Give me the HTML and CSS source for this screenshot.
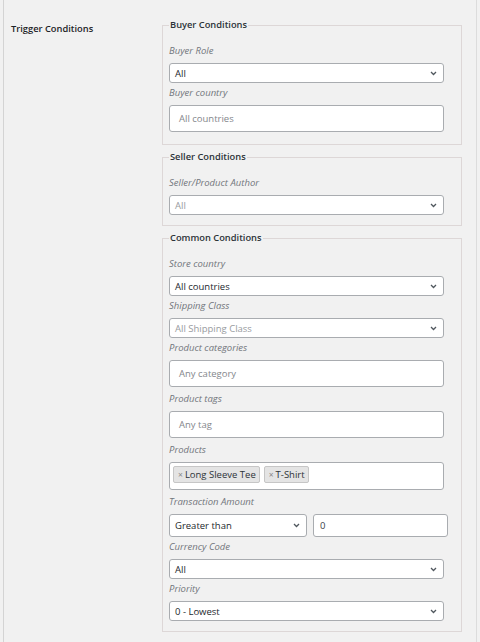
FILE: index.html
```html
<!DOCTYPE html>
<html>
<head>
<meta charset="utf-8">
<link rel="stylesheet" href="styles.css">
</head>
<body>
<div class="panel">
  <div class="th">Trigger Conditions</div>
  <div class="td">
    <fieldset class="group">
      <legend>Buyer Conditions</legend>
      <label class="lbl">Buyer Role</label>
      <div class="select"><span>All</span><svg class="chev" viewBox="0 0 7 5" width="7" height="5"><path d="M1 1l2.5 2.5L6 1"/></svg></div>
      <label class="lbl">Buyer country</label>
      <div class="multi"><span class="ph">All countries</span></div>
    </fieldset>
    <fieldset class="group">
      <legend>Seller Conditions</legend>
      <label class="lbl">Seller/Product Author</label>
      <div class="select muted"><span>All</span><svg class="chev" viewBox="0 0 7 5" width="7" height="5"><path d="M1 1l2.5 2.5L6 1"/></svg></div>
    </fieldset>
    <fieldset class="group">
      <legend>Common Conditions</legend>
      <label class="lbl">Store country</label>
      <div class="select"><span>All countries</span><svg class="chev" viewBox="0 0 7 5" width="7" height="5"><path d="M1 1l2.5 2.5L6 1"/></svg></div>
      <label class="lbl">Shipping Class</label>
      <div class="select muted"><span>All Shipping Class</span><svg class="chev" viewBox="0 0 7 5" width="7" height="5"><path d="M1 1l2.5 2.5L6 1"/></svg></div>
      <label class="lbl">Product categories</label>
      <div class="multi"><span class="ph">Any category</span></div>
      <label class="lbl">Product tags</label>
      <div class="multi"><span class="ph">Any tag</span></div>
      <label class="lbl">Products</label>
      <div class="multi tags">
        <span class="tag"><span class="x">×</span>Long Sleeve Tee</span>
        <span class="tag"><span class="x">×</span>T-Shirt</span>
      </div>
      <label class="lbl">Transaction Amount</label>
      <div class="pair">
        <div class="select half"><span>Greater than</span><svg class="chev" viewBox="0 0 7 5" width="7" height="5"><path d="M1 1l2.5 2.5L6 1"/></svg></div>
        <div class="num">0</div>
      </div>
      <label class="lbl">Currency Code</label>
      <div class="select"><span>All</span><svg class="chev" viewBox="0 0 7 5" width="7" height="5"><path d="M1 1l2.5 2.5L6 1"/></svg></div>
      <label class="lbl">Priority</label>
      <div class="select"><span>0 - Lowest</span><svg class="chev" viewBox="0 0 7 5" width="7" height="5"><path d="M1 1l2.5 2.5L6 1"/></svg></div>
    </fieldset>
  </div>
</div>
</body>
</html>
```

FILE: styles.css
```css
html, body {
  margin: 0;
  background: #f1f1f1;
  font-family: "Open Sans", "Noto Sans", sans-serif;
}

.panel {
  margin-left: 3px;
  width: 474px;
  height: 642px;
  box-sizing: border-box;
  border-left: 1px solid #d4d4d4;
  border-right: 1px solid #dcdcdc;
  display: flex;
  align-items: flex-start;
}

.th {
  flex: none;
  width: 151px;
  padding: 22px 0 0 7px;
  font-weight: 600;
  font-size: 9.3px;
  line-height: 14px;
  color: #1d2327;
}

.td {
  padding-top: 18px;
}

.group {
  width: 300px;
  box-sizing: border-box;
  margin: 0 0 5px;
  padding: 9px 17px 10px 6px;
  border: 1px solid #ddd7d7;
  min-inline-size: 0;
}

.group legend {
  padding: 0 1px;
  font-weight: 600;
  font-size: 9.3px;
  line-height: 14px;
  color: #2c3338;
}

.lbl {
  display: block;
  font-style: italic;
  font-size: 9.5px;
  line-height: 18px;
  padding-top: 1px;
  margin-bottom: 3px;
  color: #72767c;
}

.select {
  box-sizing: border-box;
  width: 275px;
  height: 20px;
  border: 1px solid #a9acb0;
  border-radius: 3px;
  background: #fff;
  display: flex;
  align-items: center;
  justify-content: space-between;
  padding: 0 6px 0 5px;
  font-size: 9.5px;
  color: #23282d;
}

.select.muted {
  color: #989ba0;
}

.chev {
  flex: none;
  fill: none;
  stroke: #50575e;
  stroke-width: 1.3;
}

.multi {
  box-sizing: border-box;
  width: 275px;
  height: 27px;
  border: 1px solid #a9acb0;
  border-radius: 3px;
  background: #fff;
  margin-bottom: 2px;
  padding: 0 9px;
  display: flex;
  align-items: center;
  font-size: 9.5px;
}

.ph {
  color: #84878c;
}

.multi.tags {
  height: 28px;
  padding: 3px 3px 0;
  align-items: flex-start;
  gap: 4px;
}

.tag {
  box-sizing: border-box;
  height: 17px;
  border: 1px solid #c6c6c6;
  background: #e4e4e4;
  border-radius: 2px;
  padding: 0 3px 0 4px;
  line-height: 15px;
  color: #2c3338;
}

.tag .x {
  color: #888;
  font-size: 8.5px;
  margin-right: 2px;
}

.pair {
  display: flex;
  gap: 6px;
}

.select.half {
  flex: none;
  width: 138px;
  height: 23px;
}

.num {
  flex: none;
  box-sizing: border-box;
  width: 135px;
  height: 23px;
  border: 1px solid #a9acb0;
  border-radius: 3px;
  background: #fff;
  padding: 0 6px;
  font-size: 9.5px;
  line-height: 21px;
  color: #3c434a;
}
```
